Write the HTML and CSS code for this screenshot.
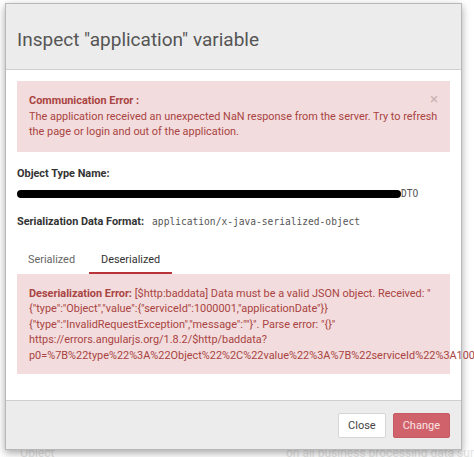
FILE: index.html
```html
<!DOCTYPE html>
<html>
<head>
<meta charset="utf-8">
<link rel="stylesheet" href="styles.css">
</head>
<body>
<div class="page">
  <div class="modal">
    <div class="modal-header">
      <h4 class="modal-title">Inspect "application" variable</h4>
    </div>
    <div class="modal-body">
      <div class="alert">
        <span class="alert-close">×</span>
        <div class="alert-title">Communication Error :</div>
        <div class="alert-text">The application received an unexpected NaN response from the server. Try to refresh the page or login and out of the application.</div>
      </div>
      <div class="field-label">Object Type Name:</div>
      <div class="type-name"><span class="redact"></span><span class="mono">DTO</span></div>
      <div class="format-row"><span class="field-label">Serialization Data Format:</span><span class="mono format">application/x-java-serialized-object</span></div>
      <div class="tabs">
        <span class="tab">Serialized</span>
        <span class="tab active">Deserialized</span>
      </div>
      <div class="error-box"><b>Deserialization Error:</b> [$http:baddata] Data must be a valid JSON object. Received: "<br>{"type":"Object","value":{"serviceId":1000001,"applicationDate"}}<br>{"type":"InvalidRequestException","message":""}". Parse error: "{}"<br>https://errors.angularjs.org/1.8.2/$http/baddata?<br>p0=%7B%22type%22%3A%22Object%22%2C%22value%22%3A%7B%22serviceId%22%3A1000001</div>
    </div>
    <div class="modal-footer">
      <button class="btn btn-default">Close</button>
      <button class="btn btn-danger">Change</button>
    </div>
  </div>
  <div class="behind">
    <span>Object</span>
    <span>on all business processing data sur</span>
  </div>
</div>
</body>
</html>
```
FILE: styles.css
```css
html, body {
  margin: 0;
  padding: 0;
  background: #fff;
  overflow: hidden;
}
body {
  font-family: Roboto, "Noto Sans", sans-serif;
  font-size: 10.9px;
  color: #333;
  width: 474px;
  height: 457px;
}
.page {
  padding: 3px 0 0 5px;
  position: relative;
  height: 454px;
}
.modal {
  width: 455px;
  border: 1px solid #b8b8b8;
  background: #fff;
  box-shadow: 0 3px 8px rgba(0,0,0,0.35);
  position: relative;
  z-index: 1;
}
.modal-header {
  background: #ececec;
  height: 65px;
  border-bottom: 1px solid #cfcfcf;
  display: flex;
  align-items: center;
  padding: 0 11px;
}
.modal-title {
  margin: 0;
  font-weight: 400;
  font-size: 19px;
  color: #555;
  padding-top: 6px;
}
.modal-body {
  padding: 11px 11px 26px 11px;
}
.alert {
  background: #f2dcdd;
  color: #a94442;
  padding: 12px 6px 12px 12px;
  line-height: 15.5px;
  position: relative;
}
.alert-title {
  font-weight: 700;
}
.alert-close {
  position: absolute;
  right: 12px;
  top: 11px;
  color: #c9b3b4;
  font-size: 15px;
}
.field-label {
  font-weight: 700;
  color: #333;
}
.modal-body > .field-label {
  margin-top: 14px;
  line-height: 16px;
}
.type-name {
  display: flex;
  align-items: center;
  margin-top: 7px;
  height: 10px;
}
.redact {
  display: block;
  width: 384px;
  height: 8px;
  background: #000;
  border-radius: 4px;
}
.mono {
  font-family: "DejaVu Sans Mono", "Liberation Mono", monospace;
  font-size: 9.6px;
  color: #555;
}
.format-row {
  margin-top: 16px;
  display: flex;
  align-items: baseline;
  gap: 8px;
}
.tabs {
  margin-top: 20px;
  display: flex;
  gap: 2px;
}
.tab {
  color: #666;
  padding: 4px 12px 5px 12px;
  line-height: 15px;
}
.tab:first-child {
  padding-left: 11px;
}
.tab.active {
  color: #333;
  border-bottom: 2px solid #b8343a;
}
.error-box {
  background: #f2dcdd;
  color: #a94442;
  padding: 12px 12px 11px 12px;
  line-height: 15.5px;
  white-space: nowrap;
}
.modal-footer {
  background: #ececec;
  border-top: 1px solid #cfcfcf;
  height: 48px;
  display: flex;
  align-items: center;
  justify-content: flex-end;
  gap: 7px;
  padding: 0 11px;
}
.btn {
  font-family: Roboto, "Noto Sans", sans-serif;
  font-size: 11px;
  height: 25px;
  padding: 0 9px;
  border: 1px solid;
  border-radius: 2px;
  cursor: pointer;
}
.btn-default {
  background: #fff;
  border-color: #d6d6d6;
  color: #444;
}
.btn-danger {
  background: #d0626b;
  border-color: #c85a63;
  color: #fbe3e4;
}
.behind {
  display: flex;
  justify-content: space-between;
  color: #e4e4e4;
  padding: 0 0 0 15px;
  margin-top: -4px;
  font-size: 12px;
}
```
